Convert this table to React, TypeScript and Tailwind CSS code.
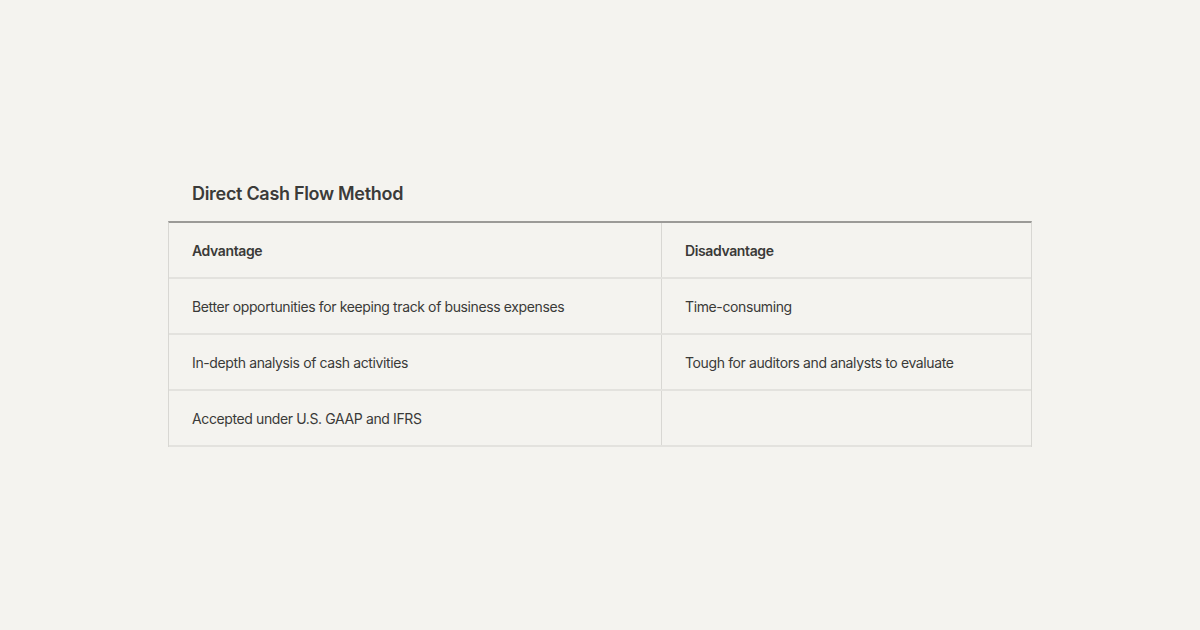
const rows: [string, string][] = [
  ["Better opportunities for keeping track of business expenses", "Time-consuming"],
  ["In-depth analysis of cash activities", "Tough for auditors and analysts to evaluate"],
  ["Accepted under U.S. GAAP and IFRS", ""],
];

export default function App() {
  return (
    <div
      className="w-[1200px] h-[630px] bg-[#f4f3ef] pt-[182px] px-[168px] text-[#3a3a38]"
      style={{ fontFamily: "Inter, 'Noto Sans', sans-serif" }}
    >
      <h2 className="pl-6 text-[18px] leading-6 font-semibold tracking-[-0.3px] text-[#3b3b39]">
        Direct Cash Flow Method
      </h2>
      <div className="mt-[15px] border-t-2 border-[#9b9a97] border-l border-r border-l-[#d8d7d3] border-r-[#d8d7d3] text-[14px] tracking-[-0.38px]">
        <div className="grid grid-cols-[493px_1fr] h-[56px] border-b-2 border-[#e3e2de]">
          <div className="flex items-center pl-[23px] border-r border-[#d8d7d3] font-semibold">
            Advantage
          </div>
          <div className="flex items-center pl-[23px] font-semibold">Disadvantage</div>
        </div>
        {rows.map(([a, d], i) => (
          <div key={i} className="grid grid-cols-[493px_1fr] h-[56px] border-b-2 border-[#e3e2de]">
            <div className="flex items-center pl-[23px] border-r border-[#d8d7d3]">{a}</div>
            <div className="flex items-center pl-[23px]">{d}</div>
          </div>
        ))}
      </div>
    </div>
  );
}
